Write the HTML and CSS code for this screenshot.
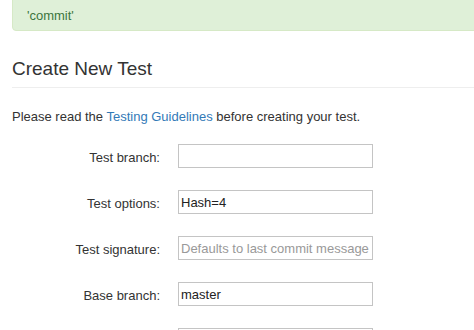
FILE: index.html
```html
<!DOCTYPE html>
<html lang="en">
<head>
    <meta charset="UTF-8">
    <title>Create New Test</title>
    <link rel="stylesheet" href="styles.css">
</head>
<body>
    <div class="container">
        <div class="alert">'commit'</div>
        <h2 class="title">Create New Test</h2>
        <p class="intro">Please read the <a href="#">Testing Guidelines</a> before creating your test.</p>
        <form class="test-form">
            <div class="row">
                <label for="branch">Test branch:</label>
                <input type="text" id="branch">
            </div>
            <div class="row">
                <label for="options">Test options:</label>
                <input type="text" id="options" value="Hash=4">
            </div>
            <div class="row">
                <label for="signature">Test signature:</label>
                <input type="text" id="signature" placeholder="Defaults to last commit message">
            </div>
            <div class="row">
                <label for="base">Base branch:</label>
                <input type="text" id="base" value="master">
            </div>
            <div class="row">
                <label for="extra"></label>
                <input type="text" id="extra">
            </div>
        </form>
    </div>
</body>
</html>
```

FILE: styles.css
```css
body {
    margin: 0;
    font-family: "Liberation Sans", Arial, sans-serif;
    font-size: 13px;
    color: #333;
    background: #fff;
    overflow: hidden;
}
.container {
    padding: 0 0 0 12px;
}
.alert {
    margin: -4px -20px 0 0;
    padding: 10px 14px 5px;
    line-height: 18px;
    background-color: #dff0d8;
    border: 1px solid #d6e9c6;
    border-radius: 4px;
    color: #3c763d;
}
.title {
    margin: 27px 0 0 0;
    padding-bottom: 8px;
    font-size: 19px;
    font-weight: normal;
    line-height: 21px;
    border-bottom: 1px solid #eee;
}
.intro {
    margin: 20px 0 0 0;
    line-height: 18px;
}
.intro a {
    color: #337ab7;
    text-decoration: none;
}
.test-form {
    margin-top: 18px;
}
.row {
    display: flex;
    align-items: center;
    margin-bottom: 22px;
}
.row label {
    width: 148px;
    text-align: right;
    margin-right: 18px;
    padding-top: 3px;
}
.row input {
    box-sizing: border-box;
    width: 195px;
    height: 24px;
    padding: 0 2px;
    border: 1px solid #c4c4c4;
    font-family: "Liberation Sans", Arial, sans-serif;
    font-size: 13px;
    color: #222;
    outline: none;
}
.row input::placeholder {
    color: #999;
}
```
